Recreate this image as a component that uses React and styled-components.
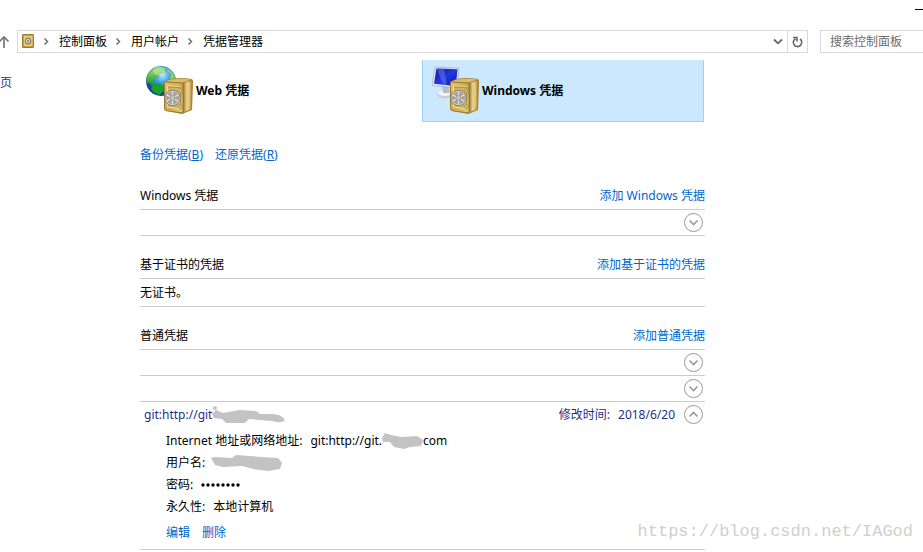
import React from "react";
import styled, { createGlobalStyle } from "styled-components";

const GlobalStyle = createGlobalStyle`
  * { box-sizing: border-box; }
  body {
    margin: 0;
    background: #fff;
    color: #000;
    font: 12px/22px "Noto Sans", "Noto Sans CJK SC", sans-serif;
  }
  button, input { font: inherit; color: inherit; }
`;

const Page = styled.div`
  position: relative;
  overflow: hidden;
`;

const TitleBar = styled.header`
  display: flex;
  justify-content: flex-end;
  height: 30px;
  overflow: hidden;
`;

const MinimizeButton = styled.button`
  width: 8px;
  height: 10px;
  padding: 0;
  border: 0;
  border-bottom: 1px solid #000;
  background: none;
`;

const AddressRow = styled.div`
  display: flex;
  height: 23px;
`;

const IconButton = styled.button`
  display: flex;
  align-items: center;
  justify-content: center;
  flex: none;
  width: ${(p) => p.$width}px;
  padding: 0;
  border: 0;
  border-left: ${(p) => (p.$divided ? "1px solid #d9d9d9" : "0")};
  background: none;
`;

const AddressBox = styled.nav`
  display: flex;
  flex: 1;
  min-width: 0;
  padding-left: 4px;
  border: 1px solid #d9d9d9;
`;

const Crumbs = styled.ol`
  display: flex;
  align-items: center;
  flex: 1;
  margin: 0;
  padding: 0;
  list-style: none;
  line-height: 20px;
`;

const Crumb = styled.li`
  display: flex;
  align-items: center;
  white-space: nowrap;
`;

const CrumbLink = styled.a`
  color: #000;
  text-decoration: none;
`;

const CrumbArrow = styled.svg`
  margin: 0 9px 0 7px;
`;

const SearchBox = styled.input`
  flex: none;
  width: 103px;
  margin-left: 12px;
  padding: 0 0 0 9px;
  border: 1px solid #d9d9d9;
  border-right: 0;
  border-radius: 0;
  background: #fff;
  outline: 0;
  &::placeholder { color: #6d6d6d; opacity: 1; }
`;

const Body = styled.div`
  display: grid;
  grid-template-columns: 140px minmax(0, 565px) 1fr;
  padding-top: 7px;
`;

const Side = styled.aside`
  padding-top: 12px;
`;

const Link = styled.a`
  color: ${(p) => (p.$dark ? "#1f3a8a" : "#0066cc")};
  text-decoration: none;
  white-space: nowrap;
`;

const Tabs = styled.div`
  display: grid;
  grid-template-columns: 1fr 1fr;
  gap: 4px;
  margin: 0 1px 0 -4px;
`;

const Tab = styled.button`
  display: flex;
  align-items: center;
  gap: 2px;
  height: 62px;
  padding: 0 9px;
  border: 1px solid ${(p) => (p.$active ? "#99d1ff" : "transparent")};
  border-top: 0;
  background: ${(p) => (p.$active ? "#cce8ff" : "transparent")};
  font-weight: 700;
  text-align: left;
`;

const Actions = styled.div`
  display: flex;
  gap: 12px;
  margin: 22px 0 18px;
`;

const Section = styled.section`
  margin-bottom: 17px;
  &:last-child { margin-bottom: 0; }
`;

const SectionHead = styled.div`
  display: flex;
  align-items: center;
  justify-content: space-between;
  height: 26px;
  padding-bottom: 1px;
  border-bottom: 1px solid #ccc;
`;

const SectionTitle = styled.h2`
  margin: 0;
  font-size: 12px;
  font-weight: 400;
`;

const EmptyRow = styled.p`
  margin: 0;
  height: 28px;
  line-height: 27px;
  border-bottom: 1px solid #ccc;
`;

const Entry = styled.div`
  border-bottom: 1px solid #ccc;
`;

const EntryHead = styled.div`
  display: flex;
  align-items: center;
  height: 25px;
  padding: 0 2px 0 4px;
  color: #1f2f86;
`;

const EntryName = styled.span`
  display: flex;
  align-items: center;
  flex: 1;
`;

const Modified = styled.span`
  display: flex;
  gap: 8px;
  margin-right: 9px;
`;

const Toggle = styled.button`
  display: flex;
  width: 19px;
  height: 19px;
  padding: 0;
  border: 0;
  background: none;
`;

const Details = styled.dl`
  margin: 3px 0 0 26px;
`;

const Detail = styled.div`
  display: flex;
  align-items: center;
  gap: ${(p) => p.$gap}px;
  height: 22px;
  dt, dd { margin: 0; white-space: nowrap; }
  dd { display: flex; align-items: center; }
`;

const EntryActions = styled.div`
  display: flex;
  gap: 12px;
  margin: 4px 0 5px 26px;
`;

const Smudge = styled.svg`
  flex: none;
  fill: #c3c3c3;
`;

const Dots = styled.svg`
  display: block;
`;

const Watermark = styled.div`
  position: absolute;
  right: 10px;
  bottom: 8px;
  color: #d0d0cb;
  font: 17px/20px "Liberation Mono", monospace;
`;

function Safe() {
  return (
    <g>
      <defs>
        <linearGradient id="front" x1="0" y1="0" x2="1" y2="1">
          <stop offset="0" stopColor="#e2c673" />
          <stop offset="0.5" stopColor="#cda94b" />
          <stop offset="1" stopColor="#e3cb70" />
        </linearGradient>
        <linearGradient id="flank" x1="0" y1="0" x2="1" y2="0">
          <stop offset="0" stopColor="#94702a" />
          <stop offset="0.45" stopColor="#f0dda0" />
          <stop offset="1" stopColor="#b48b35" />
        </linearGradient>
      </defs>
      <path d="M18 16 24 13 Q35 11 46 13 L47 15 46 44 36 48 20 45 Q18 44 18 42Z" fill="#a98435" />
      <path d="M19 15.5 25 13.5 Q36 12 45.500 13.500 L37 16.500Z" fill="#d8bd70" />
      <path d="M37 17 46 14 45.500 43 37 47Z" fill="url(#flank)" stroke="#a27d2c" strokeWidth=".6" />
      <path d="M40 19 44 17.500 43.500 40 40 42Z" fill="#e4cb83" />
      <path d="M18.500 16 37 17 37 47 20 44.500 Q18.500 44 18.500 42Z" fill="url(#front)" stroke="#94712b" strokeWidth=".8" />
      <path d="M21.500 20 34 20.500 34 43 21.500 41Z" fill="#d2b15c" stroke="#f2df9c" strokeWidth="1" />
      <path d="M22 21 34 21.500M34.500 21V43" fill="none" stroke="#967635" strokeWidth=".7" />
      <path d="M33 23h2.500v3H33zM33 39h2.500v3H33z" fill="#e9dcb0" stroke="#806223" strokeWidth=".5" />
      <circle cx="26.500" cy="32" r="6.800" fill="#aaa48e" stroke="#77746c" strokeWidth="2.400" />
      <circle cx="26.500" cy="32" r="6.700" fill="none" stroke="#cfcfcf" strokeWidth="1.200" />
      <path d="M26.500 26v12M21 29l11 6M21 35l11-6" stroke="#e4e4e4" strokeWidth="1.400" />
      <circle cx="26.500" cy="32" r="2.600" fill="#c2c2c2" stroke="#888" strokeWidth=".6" />
    </g>
  );
}

function WebIcon() {
  return (
    <svg width="48" height="50" viewBox="0 0 48 50" aria-hidden="true">
      <defs>
        <radialGradient id="sea" cx=".55" cy=".3" r=".7">
          <stop offset="0" stopColor="#bfeaff" />
          <stop offset=".35" stopColor="#3fa4e8" />
          <stop offset=".8" stopColor="#164ca6" />
          <stop offset="1" stopColor="#10357b" />
        </radialGradient>
        <linearGradient id="land" x1="0" y1="0" x2="0" y2="1">
          <stop offset="0" stopColor="#a9e26b" />
          <stop offset="1" stopColor="#159a2b" />
        </linearGradient>
      </defs>
      <circle cx="15" cy="15" r="15" fill="url(#sea)" />
      <path d="M4 6Q9 0 15 1L20 2 17 5 19 7 14 8 12 12 9 11 7 15 10 18 6 19 3 16 1 18Q-1 11 4 6Z" fill="url(#land)" />
      <path d="M21 2Q28 6 29 12L27 15 24 12 25 8 22 6Z" fill="#8bd252" />
      <path d="M8 18Q13 16 17 20L18 24 14 29Q8 28 5 23Z" fill="#18a12d" />
      <ellipse cx="13" cy="6" rx="6" ry="3.500" fill="#fff" opacity=".3" />
      <Safe />
    </svg>
  );
}

function WindowsIcon() {
  return (
    <svg width="48" height="50" viewBox="0 0 48 50" aria-hidden="true">
      <defs>
        <linearGradient id="screen" x1="0" y1="0" x2="1" y2="1">
          <stop offset="0" stopColor="#0711a0" />
          <stop offset=".5" stopColor="#2338dc" />
          <stop offset="1" stopColor="#0613a5" />
        </linearGradient>
      </defs>
      <ellipse cx="13" cy="28.500" rx="8" ry="4" fill="#c5d1da" />
      <ellipse cx="13" cy="27" rx="7" ry="3" fill="#f0f4f6" />
      <path d="M10 20h7l1 7h-7z" fill="#b4c0ca" />
      <path d="M3 1 27 2 25 22 0 19.500Z" fill="#e1e6ee" stroke="#9eabc0" strokeWidth=".7" />
      <path d="M4.500 2.500 25.500 3.300 23.800 20 2 17.800Z" fill="url(#screen)" />
      <path d="M4.500 2.500 12 2.800 15 19 11 18.600Z" fill="#7484ff" opacity=".45" />
      <Safe />
    </svg>
  );
}

function VaultIcon() {
  return (
    <svg width="13" height="21" viewBox="0 0 13 21" aria-hidden="true">
      <rect x=".5" y="3.500" width="11" height="13" rx=".5" fill="#c79f41" stroke="#a27a2a" />
      <rect x="2.500" y="5.500" width="7.500" height="9" fill="#d9bb68" stroke="#f0dc9a" strokeWidth=".7" />
      <circle cx="6" cy="10" r="2.800" fill="#ded5bd" stroke="#827559" />
      <circle cx="6" cy="10" r="1" fill="#777" />
    </svg>
  );
}

function ToggleButton({ open, label }) {
  return (
    <Toggle aria-expanded={!!open} aria-label={label}>
      <svg width="19" height="19" viewBox="0 0 19 19" fill="none" stroke="#999">
        <circle cx="9.500" cy="9.500" r="9" strokeWidth="1" />
        <path d={open ? "M5.500 11.500 9.500 7.500 13.500 11.500" : "M5.500 7.500 9.500 11.500 13.500 7.500"} strokeWidth="1.600" />
      </svg>
    </Toggle>
  );
}

function Group({ title, add, children }) {
  return (
    <Section>
      <SectionHead>
        <SectionTitle>{title}</SectionTitle>
        <Link href="#add">{add}</Link>
      </SectionHead>
      {children}
    </Section>
  );
}

function ClosedEntry() {
  return (
    <Entry>
      <EntryHead>
        <EntryName />
        <ToggleButton label="展开" />
      </EntryHead>
    </Entry>
  );
}

export default function App() {
  return (
    <Page>
      <GlobalStyle />
      <TitleBar>
        <MinimizeButton aria-label="最小化" />
      </TitleBar>
      <AddressRow>
        <IconButton $width={17} aria-label="向上">
          <svg width="17" height="21" viewBox="0 0 17 21" fill="none" stroke="#777" strokeWidth="1.700">
            <path d="M4 17V6M-.5 10.500 4 6 8.500 10.500" />
          </svg>
        </IconButton>
        <AddressBox aria-label="地址">
          <VaultIcon />
          <Crumbs>
            {["控制面板", "用户帐户", "凭据管理器"].map((name) => (
              <Crumb key={name}>
                <CrumbArrow width="8" height="9" viewBox="0 0 8 9" fill="none" stroke="#707070" strokeWidth="1.500">
                  <path d="M2.500 1.500 5.500 4.500 2.500 7.500" />
                </CrumbArrow>
                <CrumbLink href="#crumb">{name}</CrumbLink>
              </Crumb>
            ))}
          </Crumbs>
          <IconButton $width={18} aria-label="历史记录">
            <svg width="10" height="7" viewBox="0 0 10 7" fill="none" stroke="#666" strokeWidth="1.800">
              <path d="M1 1.500 5 5.300 9 1.500" />
            </svg>
          </IconButton>
          <IconButton $width={20} $divided aria-label="刷新">
            <svg width="11" height="12" viewBox="0 0 11 12" fill="none" stroke="#666" strokeWidth="1.600">
              <path d="M8 3A4.200 4.200 0 1 1 3.500 2.700" />
              <path d="M1 1.500H5V5.500" />
            </svg>
          </IconButton>
        </AddressBox>
        <SearchBox type="search" aria-label="搜索控制面板" placeholder="搜索控制面板" />
      </AddressRow>
      <Body>
        <Side>
          <Link $dark href="#home">页</Link>
        </Side>
        <main>
          <Tabs>
            <Tab>
              <WebIcon />
              Web 凭据
            </Tab>
            <Tab $active aria-pressed="true">
              <WindowsIcon />
              Windows 凭据
            </Tab>
          </Tabs>
          <Actions>
            <Link href="#backup">备份凭据(<u>B</u>)</Link>
            <Link href="#restore">还原凭据(<u>R</u>)</Link>
          </Actions>
          <Group title="Windows 凭据" add="添加 Windows 凭据">
            <ClosedEntry />
          </Group>
          <Group title="基于证书的凭据" add="添加基于证书的凭据">
            <EmptyRow>无证书。</EmptyRow>
          </Group>
          <Group title="普通凭据" add="添加普通凭据">
            <ClosedEntry />
            <ClosedEntry />
            <Entry>
              <EntryHead>
                <EntryName>
                  git:http://git
                  <Smudge width="73" height="20" viewBox="0 0 73 20" aria-hidden="true">
                    <circle cx="3" cy="3" r="2" />
                    <path d="M0 9 4 5 11 8 27 5 44 6 48 9 59 9Q70 9 73 15 70 19 60 16L37 14 33 18 14 18 10 14 2 13Z" />
                  </Smudge>
                </EntryName>
                <Modified>
                  <span>修改时间:</span>
                  <span>2018/6/20</span>
                </Modified>
                <ToggleButton open label="折叠" />
              </EntryHead>
              <Details>
                <Detail $gap={8}>
                  <dt>Internet 地址或网络地址:</dt>
                  <dd>
                    git:http://git.
                    <Smudge width="41" height="16" viewBox="0 0 41 16" aria-hidden="true">
                      <path d="M0 5 3 0 9 2 19 4 35 3 41 7 39 13 28 14 22 16 12 14 8 9 1 9Z" />
                    </Smudge>
                    com
                  </dd>
                </Detail>
                <Detail $gap={6}>
                  <dt>用户名:</dt>
                  <dd>
                    <Smudge width="72" height="18" viewBox="0 0 72 18" aria-hidden="true">
                      <path d="M0 4 3 3 21 4 25 1 51 3 67 4 71 9 69 15 57 17 42 15 31 12 12 13 4 11Z" />
                    </Smudge>
                  </dd>
                </Detail>
                <Detail $gap={8}>
                  <dt>密码:</dt>
                  <dd>
                    <Dots width="40" height="4" viewBox="0 0 40 4" role="img" aria-label="密码已隐藏">
                      {[2, 7, 12, 17, 22, 27, 32, 37].map((x) => (
                        <circle key={x} cx={x} cy="2" r="1.700" />
                      ))}
                    </Dots>
                  </dd>
                </Detail>
                <Detail $gap={8}>
                  <dt>永久性:</dt>
                  <dd>本地计算机</dd>
                </Detail>
              </Details>
              <EntryActions>
                <Link href="#edit">编辑</Link>
                <Link href="#delete">删除</Link>
              </EntryActions>
            </Entry>
          </Group>
        </main>
      </Body>
      <Watermark>https://blog.csdn.net/IAGod</Watermark>
    </Page>
  );
}
